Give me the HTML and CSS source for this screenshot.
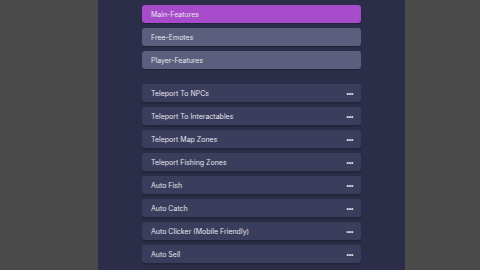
FILE: index.html
```html
<!DOCTYPE html>
<html lang="en">
<head>
  <meta charset="UTF-8">
  <title>Features</title>
  <link rel="stylesheet" href="styles.css">
</head>
<body>
  <div class="panel">
    <div class="tabs">
      <button class="tab active">Main-Features</button>
      <button class="tab">Free-Emotes</button>
      <button class="tab">Player-Features</button>
    </div>

    <div class="list">
      <div class="item"><span>Teleport To NPCs</span><span class="more">•••</span></div>
      <div class="item"><span>Teleport To Interactables</span><span class="more">•••</span></div>
      <div class="item"><span>Teleport Map Zones</span><span class="more">•••</span></div>
      <div class="item"><span>Teleport Fishing Zones</span><span class="more">•••</span></div>
      <div class="item"><span>Auto Fish</span><span class="more">•••</span></div>
      <div class="item"><span>Auto Catch</span><span class="more">•••</span></div>
      <div class="item"><span>Auto Clicker (Mobile Friendly)</span><span class="more">•••</span></div>
      <div class="item"><span>Auto Sell</span><span class="more">•••</span></div>
    </div>
  </div>
</body>
</html>
```

FILE: styles.css
```css
:root {
  --outer: #4b4a4a;
  --panel: #2c2e49;
  --accent: #a64bca;
  --tab: #5b5e7c;
  --item: #3b3d5d;
  --text: #e6e6ee;
}

* {
  margin: 0;
  padding: 0;
  box-sizing: border-box;
}

body {
  background-color: var(--outer);
  font-family: 'Inter', 'Roboto', sans-serif;
  color: var(--text);
  height: 270px;
  overflow: hidden;
}

.panel {
  width: 307px;
  height: 270px;
  margin-left: 98px;
  background-color: var(--panel);
  padding: 5px 44px 0;
  display: flex;
  flex-direction: column;
  gap: 15px;
}

.tabs,
.list {
  display: flex;
  flex-direction: column;
  gap: 5px;
}

.tab {
  height: 18px;
  border: none;
  border-radius: 3px;
  background-color: var(--tab);
  color: var(--text);
  font-family: inherit;
  font-size: 7px;
  text-align: left;
  padding: 0 9px;
  box-shadow: 0 1px 1px rgba(0, 0, 0, 0.25);
}

.tab.active {
  background-color: var(--accent);
}

.item {
  height: 18px;
  border-radius: 3px;
  background-color: var(--item);
  font-size: 7px;
  padding: 0 8px 0 9px;
  display: flex;
  align-items: center;
  justify-content: space-between;
  box-shadow: 0 2px 1px rgba(0, 0, 0, 0.18);
}

.more {
  font-size: 6px;
  font-weight: bold;
  letter-spacing: -0.6px;
  color: #ffffff;
}
```
